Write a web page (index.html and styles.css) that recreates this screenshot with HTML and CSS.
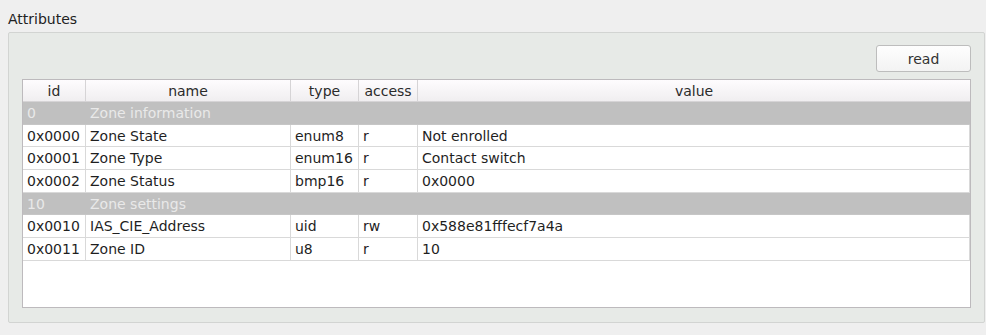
FILE: index.html
```html
<!DOCTYPE html>
<html>
<head>
<meta charset="utf-8">
<link rel="stylesheet" href="styles.css">
</head>
<body>
<div class="page">
  <div class="title">Attributes</div>
  <div class="group">
    <div class="toolbar"><button class="btn">read</button></div>
    <div class="grid">
      <div class="row head">
        <div class="c c-id">id</div>
        <div class="c c-name">name</div>
        <div class="c c-type">type</div>
        <div class="c c-acc">access</div>
        <div class="c c-val">value</div>
      </div>
      <div class="row sect">
        <div class="c c-id">0</div>
        <div class="c c-rest">Zone information</div>
      </div>
      <div class="row">
        <div class="c c-id">0x0000</div>
        <div class="c c-name">Zone State</div>
        <div class="c c-type">enum8</div>
        <div class="c c-acc">r</div>
        <div class="c c-val">Not enrolled</div>
      </div>
      <div class="row">
        <div class="c c-id">0x0001</div>
        <div class="c c-name">Zone Type</div>
        <div class="c c-type">enum16</div>
        <div class="c c-acc">r</div>
        <div class="c c-val">Contact switch</div>
      </div>
      <div class="row">
        <div class="c c-id">0x0002</div>
        <div class="c c-name">Zone Status</div>
        <div class="c c-type">bmp16</div>
        <div class="c c-acc">r</div>
        <div class="c c-val">0x0000</div>
      </div>
      <div class="row sect">
        <div class="c c-id">10</div>
        <div class="c c-rest">Zone settings</div>
      </div>
      <div class="row">
        <div class="c c-id">0x0010</div>
        <div class="c c-name">IAS_CIE_Address</div>
        <div class="c c-type">uid</div>
        <div class="c c-acc">rw</div>
        <div class="c c-val">0x588e81fffecf7a4a</div>
      </div>
      <div class="row">
        <div class="c c-id">0x0011</div>
        <div class="c c-name">Zone ID</div>
        <div class="c c-type">u8</div>
        <div class="c c-acc">r</div>
        <div class="c c-val">10</div>
      </div>
    </div>
  </div>
</div>
</body>
</html>
```

FILE: styles.css
```css
html, body {
  margin: 0;
  padding: 0;
  background: #efefef;
  width: 986px;
  height: 335px;
  overflow: hidden;
}

.page {
  padding: 11px 2px 0 8px;
  font-family: "DejaVu Sans", sans-serif;
  font-size: 14px;
  color: #1f1f1f;
}

.title {
  line-height: 16px;
  height: 16px;
  color: #222;
}

.group {
  margin-top: 5px;
  width: 977px;
  height: 291px;
  box-sizing: border-box;
  border: 1px solid #d2d4d2;
  border-radius: 2px;
  background: #e7eae7;
  padding: 12px 13px 0 13px;
}

.toolbar {
  display: flex;
  justify-content: flex-end;
  height: 27px;
  margin-bottom: 7px;
}

.btn {
  width: 95px;
  height: 27px;
  box-sizing: border-box;
  border: 1px solid #bdbdbd;
  border-radius: 3px;
  background: linear-gradient(#fefefe, #f3f3f3);
  font-family: "DejaVu Sans", sans-serif;
  font-size: 14px;
  color: #333;
  padding: 0;
}

.grid {
  width: 949px;
  height: 229px;
  box-sizing: border-box;
  border: 1px solid #bdbabd;
  background: #fff;
}

.row {
  display: flex;
  height: 22.7px;
  box-sizing: border-box;
  border-bottom: 1px solid #d9d9d9;
}

.row.head {
  height: 22px;
  background: linear-gradient(#fefcfe, #f0eef0);
  border-bottom: 1px solid #d6d4d6;
  color: #2b2b2b;
}

.c {
  box-sizing: border-box;
  display: flex;
  align-items: center;
  padding-left: 4px;
  border-right: 1px solid #d9d9d9;
  white-space: nowrap;
  overflow: hidden;
}

.head .c {
  justify-content: center;
  padding-left: 0;
  border-right-color: #d6d4d6;
}

.c-id { width: 63px; }
.c-name { width: 205px; }
.c-type { width: 68px; }
.c-acc { width: 59px; }
.c-val { width: 552px; }
.c-rest { flex: 1; }

.head .c-val { border-right: none; }

.sect {
  background: #c0c0c0;
  color: #e9e9e9;
  border-bottom-color: #c6c6c6;
}

.sect .c {
  border-right: none;
}
```
